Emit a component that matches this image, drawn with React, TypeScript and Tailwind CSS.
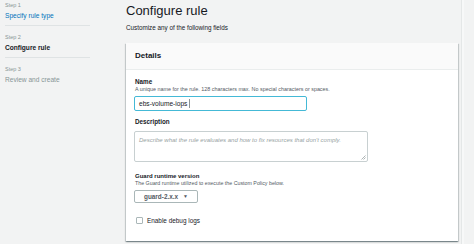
import React from "react";

const font = { fontFamily: '"Liberation Sans", Arial, sans-serif' };

function Step({ n, title, state, last }: { n: number; title: string; state: "link" | "active" | "off"; last?: boolean }) {
  const titleCls =
    state === "link"
      ? "text-[#0073bb]"
      : state === "active"
      ? "text-[#16191f] font-bold"
      : "text-[#879596]";
  return (
    <div className={n === 1 ? "" : "mt-[8px]"}>
      <div className="text-[5.5px] leading-[7px] text-[#879596]">Step {n}</div>
      <div className={`mt-[1.5px] text-[6.6px] leading-[9px] ${titleCls}`}>{title}</div>
      {!last && <div className="mt-[5.5px] h-px w-[85px] bg-[#dfe3e4]" />}
    </div>
  );
}

export default function App() {
  return (
    <div style={font} className="flex h-[244px] w-[474px] overflow-hidden bg-[#f2f3f3] text-[#16191f]">
      {/* Sidebar */}
      <div className="w-[126px] shrink-0 pl-[5px] pt-[2px]">
        <Step n={1} title="Specify rule type" state="link" />
        <Step n={2} title="Configure rule" state="active" />
        <Step n={3} title="Review and create" state="off" last />
      </div>

      {/* Main */}
      <div className="w-[332px] shrink-0 pt-[3px]">
        <h1 className="text-[13px] font-normal leading-[16px] text-[#16191f]">Configure rule</h1>
        <p className="mt-[5px] text-[6.3px] leading-[8px] text-[#16191f]">Customize any of the following fields</p>

        <div className="mt-[11px] h-[198px] bg-white shadow-[0_1px_1px_0_rgba(0,28,36,0.3),1px_1px_1px_0_rgba(0,28,36,0.15),-1px_1px_1px_0_rgba(0,28,36,0.15)]">
          <div className="flex h-[27px] items-center border-b border-[#eaeded] bg-[#fafafa] px-[9px]">
            <span className="text-[8px] font-bold leading-[10px]">Details</span>
          </div>
          <div className="pl-[8px] pt-[8px]">
            <div className="ml-px text-[6.3px] font-bold leading-[8px] text-[#16191f]">Name</div>
            <div className="ml-px text-[5.4px] leading-[7px] text-[#545b64]">
              A unique name for the rule. 128 characters max. No special characters or spaces.
            </div>
            <div className="mt-[3px] flex h-[15px] w-[173px] items-center rounded-[2px] border border-[#44b9d6] pl-[4px]">
              <span className="text-[6.6px] leading-[9px] text-[#16191f]">ebs-volume-iops</span>
              <span className="ml-[2px] h-[9px] w-px bg-[#8d9596]" />
            </div>

            <div className="ml-px mt-[7px] text-[6.3px] font-bold leading-[8px]">Description</div>
            <div className="relative mt-[5px] h-[31px] w-[234px] rounded-[2px] border border-[#c8d0d1] pl-[4px] pt-[4px] text-[6px] italic leading-[8px] text-[#98a3a4]">
              Describe what the rule evaluates and how to fix resources that don't comply.
              <svg className="absolute bottom-[1px] right-[1px]" width="5" height="5" viewBox="0 0 5 5">
                <path d="M4.5 0.5 L0.5 4.5 M4.5 2.5 L2.5 4.5" stroke="#9aa3a4" strokeWidth="0.8" />
              </svg>
            </div>

            <div className="ml-px mt-[10px] text-[6px] font-bold leading-[8px]">Guard runtime version</div>
            <div className="ml-px text-[5.3px] leading-[7px] text-[#545b64]">
              The Guard runtime utilized to execute the Custom Policy below.
            </div>
            <div className="mt-[3px] flex h-[13px] w-[64px] items-center rounded-[2px] border border-[#aab7b8] pl-[9px]">
              <span className="text-[6.4px] font-bold leading-[9px] text-[#545b64]">guard-2.x.x</span>
              <span className="ml-[5px] text-[5px] leading-[9px] text-[#545b64]">▼</span>
            </div>

            <div className="mt-[12.5px] flex h-[9px] items-center pl-[2px]">
              <span className="h-[7px] w-[7px] rounded-[1px] border border-[#aab7b8] bg-white" />
              <span className="ml-[4px] text-[6.4px] leading-[9px] text-[#16191f]">Enable debug logs</span>
            </div>
          </div>
        </div>
      </div>

      {/* Right strip */}
      <div className="flex flex-1 pl-[3px]">
        <div className="h-full w-px bg-[#e4e7e7]" />
        <div className="h-full w-[2px] bg-[#f7f8f8]" />
      </div>
    </div>
  );
}
